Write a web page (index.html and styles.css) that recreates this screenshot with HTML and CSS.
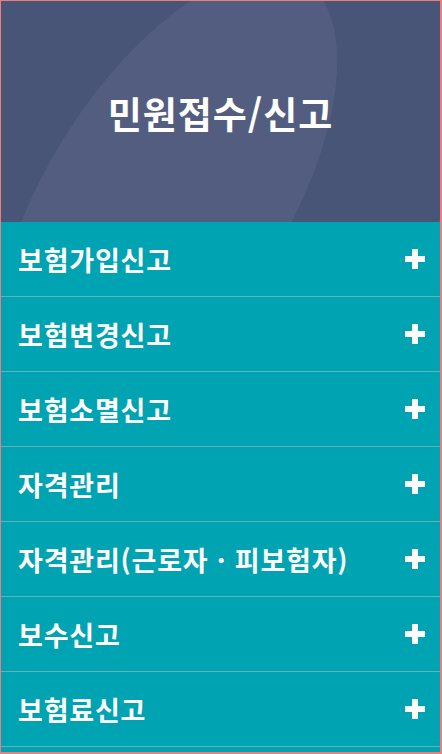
FILE: index.html
```html
<!DOCTYPE html>
<html lang="ko">
<head>
<meta charset="utf-8">
<title>민원접수/신고</title>
<link rel="stylesheet" href="styles.css">
</head>
<body>
<nav class="panel">
  <header class="panel-head">
    <span class="deco deco-a"></span>
    <span class="deco deco-b"></span>
    <h1 class="panel-title">민원접수/신고</h1>
  </header>
  <ul class="menu">
    <li class="menu-item"><span class="menu-label">보험가입신고</span><span class="plus"></span></li>
    <li class="menu-item"><span class="menu-label">보험변경신고</span><span class="plus"></span></li>
    <li class="menu-item"><span class="menu-label">보험소멸신고</span><span class="plus"></span></li>
    <li class="menu-item"><span class="menu-label">자격관리</span><span class="plus"></span></li>
    <li class="menu-item"><span class="menu-label">자격관리(근로자 · 피보험자)</span><span class="plus"></span></li>
    <li class="menu-item"><span class="menu-label">보수신고</span><span class="plus"></span></li>
    <li class="menu-item"><span class="menu-label">보험료신고</span><span class="plus"></span></li>
  </ul>
</nav>
</body>
</html>
```

FILE: styles.css
```css
* { box-sizing: border-box; }
html, body { margin: 0; padding: 0; }
body {
  width: 442px;
  height: 754px;
  font-family: "Noto Sans CJK KR", "Noto Sans", sans-serif;
  background: #fff;
}
.panel {
  width: 442px;
  height: 754px;
  border: 1px solid #ee7e7c;
  border-right-width: 2px;
  border-bottom-width: 2px;
  background: #00a3b1;
  display: flex;
  flex-direction: column;
  overflow: hidden;
}
.panel-head {
  position: relative;
  height: 221px;
  background: #485576;
  display: flex;
  align-items: center;
  justify-content: center;
  overflow: hidden;
  flex-shrink: 0;
}
.deco {
  position: absolute;
  border-radius: 50%;
  background: #525d7f;
}
.deco-a {
  width: 240px;
  height: 520px;
  left: 45px;
  top: -60px;
  transform: rotate(32deg);
}
.deco-b {
  width: 200px;
  height: 420px;
  left: 405px;
  top: 100px;
  transform: rotate(22deg);
}
.panel-title {
  position: relative;
  margin: 0;
  color: #fff;
  font-size: 37px;
  font-weight: 700;
  letter-spacing: 1px;
  line-height: 1;
  padding-top: 3px;
}
.menu {
  list-style: none;
  margin: 0;
  padding: 0;
}
.menu-item {
  height: 75px;
  border-bottom: 1px solid #62b3b7;
  display: flex;
  align-items: center;
  justify-content: space-between;
  padding: 0 15px 0 17px;
  color: #fff;
}
.menu-label {
  font-size: 27px;
  font-weight: 700;
  letter-spacing: 0.8px;
  line-height: 1;
}
.plus {
  position: relative;
  width: 20px;
  height: 20px;
}
.plus::before, .plus::after {
  content: "";
  position: absolute;
  background: #fff;
}
.plus::before {
  left: 0; right: 0;
  top: 7px; height: 6px;
}
.plus::after {
  top: 0; bottom: 0;
  left: 7px; width: 6px;
}
```
